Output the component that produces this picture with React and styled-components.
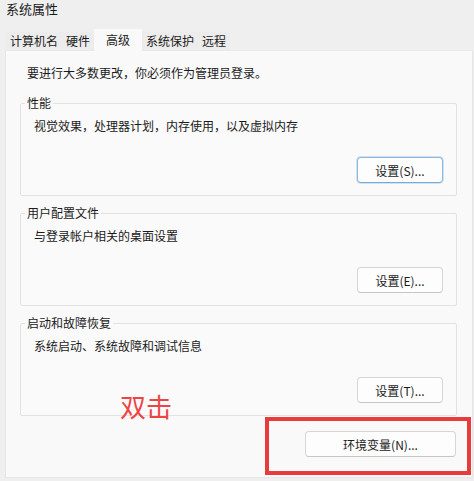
import styled, { createGlobalStyle } from 'styled-components';

const GlobalStyle = createGlobalStyle`
  html, body {
    margin: 0;
    padding: 0;
    background: #efefef;
  }
  body {
    font-family: "Noto Sans CJK SC", "Noto Sans", sans-serif;
    color: #1b1b1b;
    font-size: 12px;
  }
`;

const tabs = ['计算机名', '硬件', '高级', '系统保护', '远程'];

const groups = [
  { title: '性能', text: '视觉效果，处理器计划，内存使用，以及虚拟内存', button: '设置(S)...', focused: true },
  { title: '用户配置文件', text: '与登录帐户相关的桌面设置', button: '设置(E)...' },
  { title: '启动和故障恢复', text: '系统启动、系统故障和调试信息', button: '设置(T)...' },
];

export default function App() {
  return (
    <>
      <GlobalStyle />
      <WINDOW>
        <TITLE>系统属性</TITLE>
        <TABROW>
          {tabs.map((t) => <TAB key={t} active={t === '高级'}>{t}</TAB>)}
        </TABROW>
        <PANEL>
          <INTRO>要进行大多数更改，你必须作为管理员登录。</INTRO>
          {groups.map((g) => (
            <GROUP key={g.title}>
              <LEGEND>{g.title}</LEGEND>
              <DESC>{g.text}</DESC>
              <BUTTON focused={g.focused}>{g.button}</BUTTON>
            </GROUP>
          ))}
          <ENVBUTTON>环境变量(N)...</ENVBUTTON>
        </PANEL>
        <HINT>双击</HINT>
        <MARK />
      </WINDOW>
    </>
  );
}

const WINDOW = styled.div`
  position: relative;
  width: 474px;
  height: 481px;
  overflow: hidden;
  background: #efefef;
`;

const TITLE = styled.div`
  height: 27px;
  padding: 1px 0 0 6px;
  font-size: 13px;
  line-height: 16px;
`;

const TABROW = styled.div`
  display: flex;
  align-items: flex-end;
  height: 22px;
  padding-left: 6px;
`;

const TAB = styled.div`
  height: ${(p) => (p.active ? '22px' : '18px')};
  line-height: ${(p) => (p.active ? '22px' : '18px')};
  padding: 0 ${(p) => (p.active ? '12px' : '4px')};
  background: ${(p) => (p.active ? '#f9f9f9' : '#ececec')};
  font-size: 12px;
  position: relative;
  top: ${(p) => (p.active ? '1px' : '0')};
  white-space: nowrap;
`;

const PANEL = styled.div`
  display: flex;
  flex-direction: column;
  margin: 0 1px 0 5px;
  padding: 14px 15px 13px 14px;
  background: #f9f9f9;
  border: 1px solid #e6e6e6;
  border-top-color: #e9e9e9;
  height: 399px;
`;

const INTRO = styled.div`
  margin-left: 7px;
  line-height: 16px;
  font-size: 12px;
  margin-bottom: 14px;
`;

const GROUP = styled.fieldset`
  display: flex;
  flex-direction: column;
  margin: 0 0 9px 0;
  padding: 7px 13px 12px 13px;
  min-inline-size: 0;
  border: 1px solid #e2e2e2;
  border-radius: 2px;
  background: #fafafa;
`;

const LEGEND = styled.legend`
  padding: 0 2px;
  margin-left: -9px;
  line-height: 16px;
  font-size: 12px;
`;

const DESC = styled.div`
  line-height: 16px;
  font-size: 12px;
`;

const BUTTON = styled.div`
  align-self: flex-end;
  margin-top: 23px;
  box-sizing: border-box;
  width: 86px;
  height: 26px;
  display: flex;
  align-items: center;
  justify-content: center;
  background: #fdfdfd;
  border: 1px solid ${(p) => (p.focused ? '#8ab8de' : '#d6d6d6')};
  border-bottom-color: ${(p) => (p.focused ? '#7aabd6' : '#c6c6c6')};
  border-radius: 4px;
  font-size: 12px;
  box-shadow: ${(p) => (p.focused ? '0 0 0 1px #cfe2f3' : 'none')};
`;

const ENVBUTTON = styled(BUTTON)`
  width: 151px;
  margin-top: 6px;
  margin-right: 1px;
`;

const HINT = styled.div`
  position: absolute;
  left: 120px;
  top: 390px;
  font-size: 26px;
  line-height: 32px;
  color: #ef4444;
`;

const MARK = styled.div`
  position: absolute;
  left: 265px;
  top: 417px;
  width: 206px;
  height: 58px;
  box-sizing: border-box;
  border: 4px solid #e83b3b;
`;
